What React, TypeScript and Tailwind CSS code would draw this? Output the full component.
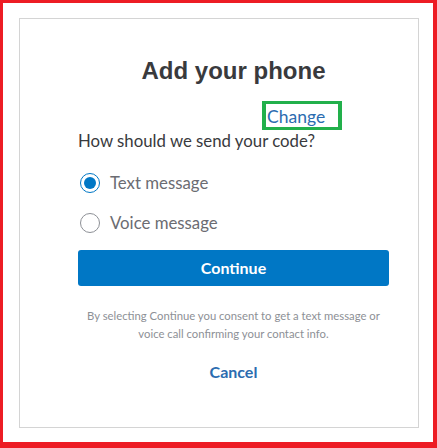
export default function App() {
  return (
    <div className="w-[437px] h-[448px] box-border border-t-[3px] border-l-[3px] border-r-[4px] border-b-[6px] border-[#ed1c24] bg-white pt-[15px] pl-[16px]">
      <div className="w-[400px] h-[410px] box-border border border-[#d4d4d4] bg-white pl-[58px] pr-[29px] pt-[38px]" style={{ fontFamily: "Lato, 'Open Sans', sans-serif" }}>
        <h1 className="text-center text-[24px] leading-[28px] font-bold text-[#393a3d]" style={{ fontFamily: "'Liberation Sans', Arial, sans-serif" }}>
          Add your phone
        </h1>

        <div className="mt-[16px] ml-[184px] w-[80px] h-[29px] box-border border-y-[3px] border-x-[4px] border-[#22b04b] flex items-center pl-[1px] pt-[3px]">
          <a href="#" className="text-[17.5px] leading-[20px] text-[#2b6cb0]">Change</a>
        </div>

        <p className="text-[16.8px] leading-[24px] text-[#393a3d] -mt-[1px]">How should we send your code?</p>

        <div className="mt-[20px] flex flex-col gap-[20px]">
          <RadioRow label="Text message" checked />
          <RadioRow label="Voice message" />
        </div>

        <button className="mt-[17px] w-full h-[36px] rounded-[3px] bg-[#0077c5] text-white text-[16px] font-bold">
          Continue
        </button>

        <p className="mt-[21px] text-center text-[11.3px] leading-[18px] text-[#8d9096]">
          By selecting Continue you consent to get a text message or
          <br />
          voice call confirming your contact info.
        </p>

        <div className="mt-[17px] text-center">
          <a href="#" className="text-[16px] leading-[24px] font-bold text-[#2b6cb0]">Cancel</a>
        </div>
      </div>
    </div>
  )
}

function RadioRow({ label, checked = false }: { label: string; checked?: boolean }) {
  return (
    <label className="flex items-center h-[20px] ml-[2px]">
      <span
        className={
          checked
            ? "w-[20px] h-[20px] rounded-full border-[1.5px] border-[#0077c5] flex items-center justify-center"
            : "w-[20px] h-[20px] rounded-full border-[1.5px] border-[#8d9096]"
        }
      >
        {checked && <span className="w-[12px] h-[12px] rounded-full bg-[#0077c5]" />}
      </span>
      <span className="ml-[10px] text-[16.8px] leading-[20px] text-[#6b6c72]">{label}</span>
    </label>
  )
}
